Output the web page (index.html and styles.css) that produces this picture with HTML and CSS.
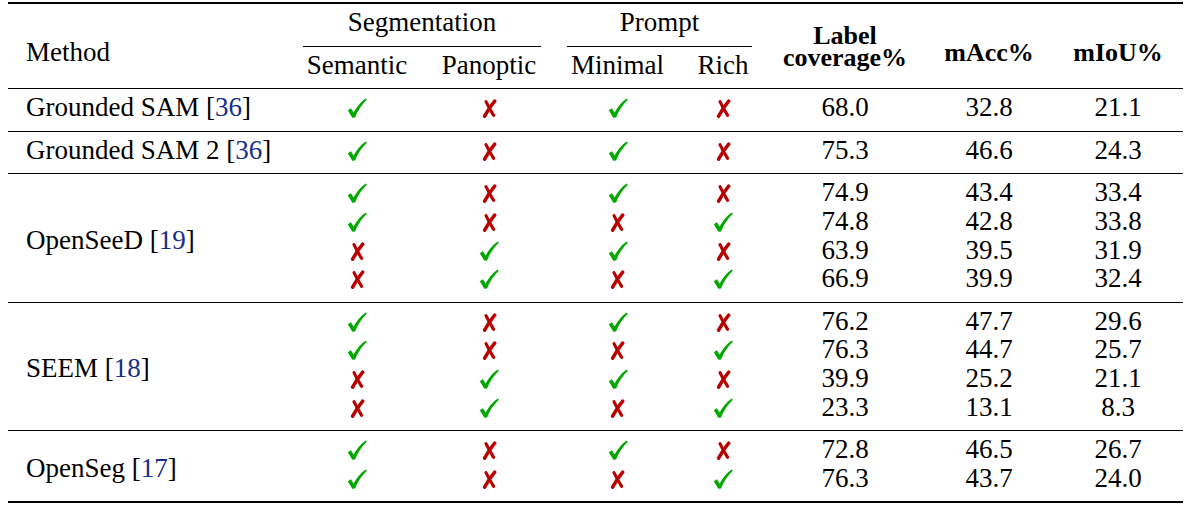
FILE: index.html
```html
<!DOCTYPE html>
<html>
<head>
<meta charset="utf-8">
<link rel="stylesheet" href="styles.css">
</head>
<body>
<svg class="defs" width="0" height="0" aria-hidden="true">
  <defs>
    <symbol id="ck" viewBox="0 0 20 20">
      <path d="M0.8 12.2 L3.9 10.3 L6.6 14.6 C9.6 9 13.6 4 18.8 0.6 L19.8 1.7 C14.6 6.6 10.6 12.6 8.1 19.4 L5.3 19.7 Z" fill="#00a800"/>
    </symbol>
    <symbol id="cx" viewBox="0 0 15 19">
      <path d="M4 2.6 Q6.8 8.5 11.6 16.4" fill="none" stroke="#b80000" stroke-width="3.1" stroke-linecap="round"/>
      <path d="M12.7 2.2 Q7.6 8.2 2.6 17.2" fill="none" stroke="#b80000" stroke-width="3.5" stroke-linecap="round"/>
    </symbol>
  </defs>
</svg>
<table class="results">
  <colgroup>
    <col class="c-method">
    <col class="c-sem">
    <col class="c-pan">
    <col class="c-min">
    <col class="c-rich">
    <col class="c-cov">
    <col class="c-acc">
    <col class="c-iou">
  </colgroup>
  <thead>
    <tr class="h1">
      <th class="method-h" rowspan="2">Method</th>
      <th class="group" colspan="2"><div class="grp">Segmentation</div></th>
      <th class="group" colspan="2"><div class="grp">Prompt</div></th>
      <th class="metric two" rowspan="2">Label<br>coverage%</th>
      <th class="metric" rowspan="2">mAcc%</th>
      <th class="metric" rowspan="2">mIoU%</th>
    </tr>
    <tr class="h2">
      <th>Semantic</th>
      <th>Panoptic</th>
      <th>Minimal</th>
      <th>Rich</th>
    </tr>
  </thead>
  <tbody>
    <tr>
      <td class="method">Grounded SAM [<span class="cite">36</span>]</td>
      <td><svg class="ico ck"><use href="#ck"/></svg></td>
      <td><svg class="ico cx"><use href="#cx"/></svg></td>
      <td><svg class="ico ck"><use href="#ck"/></svg></td>
      <td><svg class="ico cx"><use href="#cx"/></svg></td>
      <td>68.0</td><td>32.8</td><td>21.1</td>
    </tr>
  </tbody>
  <tbody>
    <tr>
      <td class="method">Grounded SAM 2 [<span class="cite">36</span>]</td>
      <td><svg class="ico ck"><use href="#ck"/></svg></td>
      <td><svg class="ico cx"><use href="#cx"/></svg></td>
      <td><svg class="ico ck"><use href="#ck"/></svg></td>
      <td><svg class="ico cx"><use href="#cx"/></svg></td>
      <td>75.3</td><td>46.6</td><td>24.3</td>
    </tr>
  </tbody>
  <tbody>
    <tr>
      <td class="method" rowspan="4">OpenSeeD [<span class="cite">19</span>]</td>
      <td><svg class="ico ck"><use href="#ck"/></svg></td>
      <td><svg class="ico cx"><use href="#cx"/></svg></td>
      <td><svg class="ico ck"><use href="#ck"/></svg></td>
      <td><svg class="ico cx"><use href="#cx"/></svg></td>
      <td>74.9</td><td>43.4</td><td>33.4</td>
    </tr>
    <tr>
      <td><svg class="ico ck"><use href="#ck"/></svg></td>
      <td><svg class="ico cx"><use href="#cx"/></svg></td>
      <td><svg class="ico cx"><use href="#cx"/></svg></td>
      <td><svg class="ico ck"><use href="#ck"/></svg></td>
      <td>74.8</td><td>42.8</td><td>33.8</td>
    </tr>
    <tr>
      <td><svg class="ico cx"><use href="#cx"/></svg></td>
      <td><svg class="ico ck"><use href="#ck"/></svg></td>
      <td><svg class="ico ck"><use href="#ck"/></svg></td>
      <td><svg class="ico cx"><use href="#cx"/></svg></td>
      <td>63.9</td><td>39.5</td><td>31.9</td>
    </tr>
    <tr>
      <td><svg class="ico cx"><use href="#cx"/></svg></td>
      <td><svg class="ico ck"><use href="#ck"/></svg></td>
      <td><svg class="ico cx"><use href="#cx"/></svg></td>
      <td><svg class="ico ck"><use href="#ck"/></svg></td>
      <td>66.9</td><td>39.9</td><td>32.4</td>
    </tr>
  </tbody>
  <tbody>
    <tr>
      <td class="method" rowspan="4">SEEM [<span class="cite">18</span>]</td>
      <td><svg class="ico ck"><use href="#ck"/></svg></td>
      <td><svg class="ico cx"><use href="#cx"/></svg></td>
      <td><svg class="ico ck"><use href="#ck"/></svg></td>
      <td><svg class="ico cx"><use href="#cx"/></svg></td>
      <td>76.2</td><td>47.7</td><td>29.6</td>
    </tr>
    <tr>
      <td><svg class="ico ck"><use href="#ck"/></svg></td>
      <td><svg class="ico cx"><use href="#cx"/></svg></td>
      <td><svg class="ico cx"><use href="#cx"/></svg></td>
      <td><svg class="ico ck"><use href="#ck"/></svg></td>
      <td>76.3</td><td>44.7</td><td>25.7</td>
    </tr>
    <tr>
      <td><svg class="ico cx"><use href="#cx"/></svg></td>
      <td><svg class="ico ck"><use href="#ck"/></svg></td>
      <td><svg class="ico ck"><use href="#ck"/></svg></td>
      <td><svg class="ico cx"><use href="#cx"/></svg></td>
      <td>39.9</td><td>25.2</td><td>21.1</td>
    </tr>
    <tr>
      <td><svg class="ico cx"><use href="#cx"/></svg></td>
      <td><svg class="ico ck"><use href="#ck"/></svg></td>
      <td><svg class="ico cx"><use href="#cx"/></svg></td>
      <td><svg class="ico ck"><use href="#ck"/></svg></td>
      <td>23.3</td><td>13.1</td><td>8.3</td>
    </tr>
  </tbody>
  <tbody>
    <tr>
      <td class="method" rowspan="2">OpenSeg [<span class="cite">17</span>]</td>
      <td><svg class="ico ck"><use href="#ck"/></svg></td>
      <td><svg class="ico cx"><use href="#cx"/></svg></td>
      <td><svg class="ico ck"><use href="#ck"/></svg></td>
      <td><svg class="ico cx"><use href="#cx"/></svg></td>
      <td>72.8</td><td>46.5</td><td>26.7</td>
    </tr>
    <tr>
      <td><svg class="ico ck"><use href="#ck"/></svg></td>
      <td><svg class="ico cx"><use href="#cx"/></svg></td>
      <td><svg class="ico cx"><use href="#cx"/></svg></td>
      <td><svg class="ico ck"><use href="#ck"/></svg></td>
      <td>76.3</td><td>43.7</td><td>24.0</td>
    </tr>
  </tbody>
</table>
</body>
</html>
```
FILE: styles.css
```css
html, body {
  margin: 0;
  padding: 0;
  background: #fff;
}

body {
  font-family: "Liberation Serif", "Times New Roman", serif;
  font-size: 27px;
  color: #000;
}

.defs {
  position: absolute;
  width: 0;
  height: 0;
  overflow: hidden;
}

.results {
  font-family: "Liberation Serif", "Times New Roman", serif;
  margin: 2px 0 0 8px;
  width: 1175px;
  table-layout: fixed;
  border-collapse: collapse;
  border-top: 2px solid #000;
  border-bottom: 2px solid #000;
}

.c-method { width: 282px; }
.c-sem { width: 134px; }
.c-pan { width: 130px; }
.c-min { width: 127px; }
.c-rich { width: 84px; }
.c-cov { width: 160px; }
.c-acc { width: 128px; }
.c-iou { width: 130px; }

th, td {
  padding: 0;
  text-align: center;
  white-space: nowrap;
  line-height: 28.6px;
  font-weight: normal;
}

thead th {
  vertical-align: top;
}

.h1 th {
  padding-top: 4px;
}

.grp {
  margin: 0 13px;
  padding-bottom: 9px;
  border-bottom: 1px solid #000;
}

.h2 th {
  padding: 4px 0 9px;
}

.method-h {
  text-align: left;
  padding-left: 18px;
  padding-top: 34px !important;
}

.metric {
  font-weight: bold;
  font-size: 26px;
  line-height: 22px;
  padding-top: 38px !important;
}

.metric.two {
  padding-top: 21px !important;
}

tbody {
  border-top: 1px solid #000;
}

tbody tr:first-child td {
  padding-top: 4px;
}

tbody tr:last-child td {
  padding-bottom: 9px;
}

td.method {
  text-align: left;
  padding-left: 18px;
  vertical-align: middle;
}

.cite {
  color: #14308a;
}

.ico {
  display: inline-block;
  vertical-align: -2px;
}

.ico.ck {
  width: 20px;
  height: 20px;
}

.ico.cx {
  width: 15px;
  height: 19px;
}
```
